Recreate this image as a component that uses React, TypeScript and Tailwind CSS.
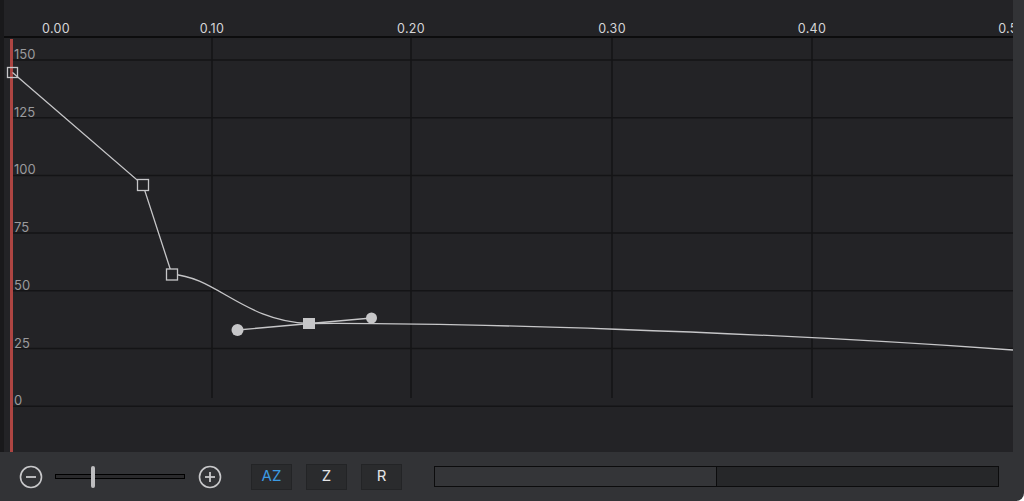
import { type ReactNode } from "react";

const FONT = { fontFamily: "Inter, 'Liberation Sans', sans-serif" };

const TIME_TICKS = [
  { label: "0.00", x: 56 },
  { label: "0.10", x: 212 },
  { label: "0.20", x: 411 },
  { label: "0.30", x: 612 },
  { label: "0.40", x: 812 },
  { label: "0.50", x: 1012 },
];

const VALUE_ROWS = [
  { label: "150", y: 60 },
  { label: "125", y: 117.7 },
  { label: "100", y: 175.4 },
  { label: "75", y: 233 },
  { label: "50", y: 290.8 },
  { label: "25", y: 348.5 },
  { label: "0", y: 406.2 },
];

const GRID_X = [212, 411, 612, 812];

const STROKE = "#c6c6c8";

function TimeRuler() {
  return (
    <div className="relative h-[38px] shrink-0 overflow-hidden border-b-2 border-[#0c0c0d]">
      {TIME_TICKS.map((tick) => (
        <span
          key={tick.label}
          className="absolute top-[21px] -translate-x-1/2 text-[12.5px] leading-[16px] tracking-[0.3px] text-[#d6d6d8]"
          style={{ left: tick.x - 4 }}
        >
          {tick.label}
        </span>
      ))}
    </div>
  );
}

function CurvePlot() {
  return (
    <svg
      width={1009}
      height={414}
      viewBox="4 38 1009 414"
      className="block shrink-0"
      style={FONT}
    >
      {GRID_X.map((x) => (
        <line key={x} x1={x} y1={38} x2={x} y2={398} stroke="#141416" strokeWidth={1.5} />
      ))}
      {VALUE_ROWS.map((row) => (
        <g key={row.label}>
          <line x1={13} y1={row.y} x2={1013} y2={row.y} stroke="#141416" strokeWidth={1.5} />
          <text x={14} y={row.y - 1} fontSize={13} fill="#9a9a9d">
            {row.label}
          </text>
        </g>
      ))}

      {/* playhead */}
      <rect x={10} y={39} width={3} height={413} fill="#ad4542" />

      {/* animation curve */}
      <path
        d="M12.5,72.5 L143,185 L172,274.5 C215,276 245,322 309,323.5 C450,322.5 750,331 1013,350"
        fill="none"
        stroke={STROKE}
        strokeWidth={1.3}
      />

      {/* tangent of selected key */}
      <line x1={237.5} y1={330} x2={371.5} y2={318} stroke={STROKE} strokeWidth={1.3} />
      <circle cx={237.5} cy={330} r={6} fill={STROKE} />
      <circle cx={371.5} cy={318} r={5.5} fill={STROKE} />

      {/* keys */}
      <rect x={7.5} y={67.5} width={10} height={10} fill="none" stroke={STROKE} strokeWidth={1.3} />
      <rect x={137.5} y={179.5} width={11} height={11} fill="#232326" stroke={STROKE} strokeWidth={1.3} />
      <rect x={166.5} y={269} width={11} height={11} fill="#232326" stroke={STROKE} strokeWidth={1.3} />
      <rect x={303} y={318} width={12} height={11} fill={STROKE} />
    </svg>
  );
}

function ZoomIcon({ plus }: { plus?: boolean }) {
  return (
    <svg width={24} height={24} viewBox="0 0 24 24" className="shrink-0">
      <circle cx={12} cy={12} r={10.5} fill="none" stroke="#c8c8ca" strokeWidth={1.6} />
      <line x1={7} y1={12} x2={17} y2={12} stroke="#c8c8ca" strokeWidth={1.8} />
      {plus ? <line x1={12} y1={7} x2={12} y2={17} stroke="#c8c8ca" strokeWidth={1.8} /> : null}
    </svg>
  );
}

function ZoomSlider() {
  return (
    <div className="relative h-[22px] w-[130px] shrink-0">
      <div className="absolute left-0 right-0 top-[8px] h-[5px] border border-black bg-[#2a2a2c]" />
      <div className="absolute left-[36px] top-0 h-[22px] w-[4px] rounded-full bg-[#bdbdbf]" />
    </div>
  );
}

function ToolButton({ children, active }: { children: ReactNode; active?: boolean }) {
  return (
    <button
      type="button"
      className={
        active
          ? "flex h-[26px] w-[41px] items-center justify-center border border-[#232426] bg-[#2a2b2d] text-[15px] text-[#3c9ae2]"
          : "flex h-[26px] w-[41px] items-center justify-center border border-[#232426] bg-[#2a2b2d] text-[15px] text-[#e4e4e6]"
      }
    >
      {children}
    </button>
  );
}

export default function App() {
  return (
    <div
      className="flex h-[501px] w-[1024px] flex-col overflow-hidden rounded-br-lg bg-[#323336]"
      style={FONT}
    >
      <div className="flex h-[452px] shrink-0">
        <div className="flex w-[1013px] shrink-0 flex-col border-l-4 border-[#19191b] bg-[#232326]">
          <TimeRuler />
          <CurvePlot />
        </div>
        <div className="flex-1" />
      </div>

      <div className="flex flex-1 items-center pl-[19px]">
        <ZoomIcon />
        <div className="ml-[12px]">
          <ZoomSlider />
        </div>
        <div className="ml-[13px]">
          <ZoomIcon plus />
        </div>
        <div className="ml-[29px] flex gap-[14px]">
          <ToolButton active>AZ</ToolButton>
          <ToolButton>Z</ToolButton>
          <ToolButton>R</ToolButton>
        </div>
        <div className="ml-[32px] flex h-[21px] w-[565px] border-[1.5px] border-[#0c0c0d]">
          <div className="w-[282px] border-r-[1.5px] border-[#0c0c0d] bg-[#343538]" />
          <div className="flex-1 bg-[#262729]" />
        </div>
      </div>
    </div>
  );
}
